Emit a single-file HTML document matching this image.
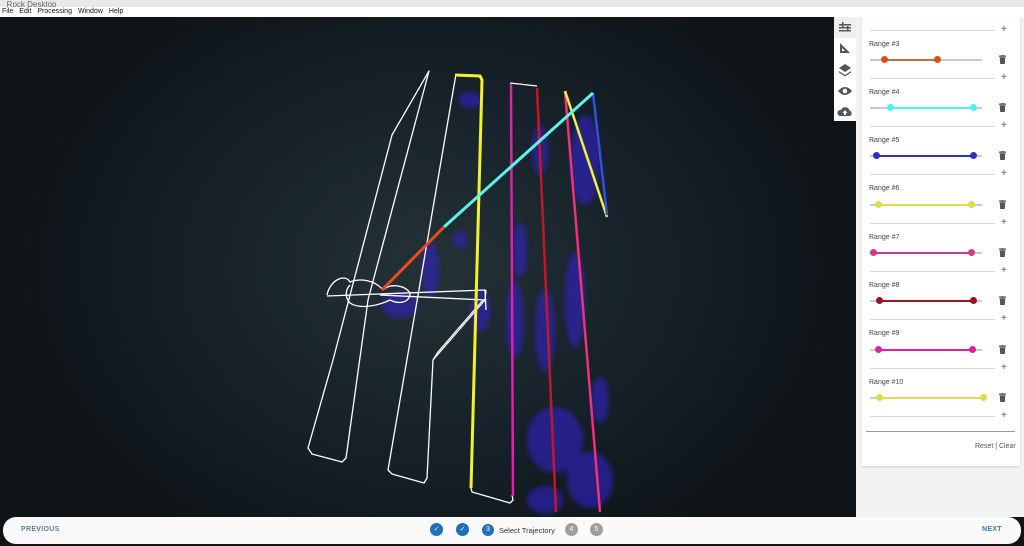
<!DOCTYPE html>
<html><head><meta charset="utf-8"><style>
*{margin:0;padding:0;box-sizing:border-box}
body{width:1024px;height:546px;overflow:hidden;background:#0e1417;font-family:"Liberation Sans",sans-serif;position:relative}
#title{position:absolute;left:0;top:0;width:1024px;height:7px;background:#e8e8e8;font-size:8px;color:#666;overflow:hidden}
#menu{position:absolute;left:0;top:7px;width:1024px;height:10px;background:#fff;font-size:7px;color:#111;line-height:10px}
#menu span{margin-left:2px;margin-right:4px}
#canvas{position:absolute;left:0;top:17px;width:834px;height:500px;background:radial-gradient(ellipse 420px 330px at 430px 250px,#243236 0%,#17222a 50%,#0e1417 100%)}
#tools{position:absolute;left:834px;top:17px;width:22px;height:104px;background:#fff}
#panel{position:absolute;left:856px;top:17px;width:168px;height:500px;background:#f2f2f2}
#card{position:absolute;left:862px;top:17px;width:158px;height:449px;background:#fff;box-shadow:0 1px 2px rgba(0,0,0,.15)}
.lbl{position:absolute;left:869px;font-size:7px;color:#444}
.trk{position:absolute;left:870px;width:112px;height:2px;background:#c5ccd8}
.rng{position:absolute;height:2px}
.th{position:absolute;width:7px;height:7px;border-radius:50%}
.trash{position:absolute;left:999px;width:7px;height:9px}
.pl{position:absolute;left:870px;width:125px;height:1px;background:#d8d8d8}
.plus{position:absolute;left:1001px;font-size:10px;color:#555;line-height:10px}
#bar{position:absolute;left:3px;top:517px;width:1018px;height:27px;background:#fafafa;border-radius:13px}
.step{position:absolute;top:523px;width:13px;height:13px;border-radius:50%;color:#fff;font-size:7px;text-align:center;line-height:13px}
</style></head><body>
<div id="title">&nbsp;&nbsp;&nbsp;Rock Desktop</div>
<div id="menu"><span>File</span><span>Edit</span><span>Processing</span><span>Window</span><span>Help</span></div>
<div id="canvas"></div>
<svg style="position:absolute;left:0;top:0" width="834" height="517">
<defs><filter id="b"><feGaussianBlur stdDeviation="2.5"/></filter></defs>
<g fill="#3320c8" opacity=".6" filter="url(#b)">
<ellipse cx="470" cy="100" rx="12" ry="8"/><ellipse cx="540" cy="150" rx="8" ry="25"/><ellipse cx="585" cy="160" rx="15" ry="45"/>
<ellipse cx="430" cy="270" rx="9" ry="28"/><ellipse cx="400" cy="305" rx="18" ry="13"/><ellipse cx="480" cy="310" rx="10" ry="22"/>
<ellipse cx="515" cy="320" rx="9" ry="38"/><ellipse cx="545" cy="330" rx="10" ry="42"/><ellipse cx="575" cy="300" rx="10" ry="48"/>
<ellipse cx="555" cy="440" rx="28" ry="33"/><ellipse cx="590" cy="480" rx="23" ry="28"/><ellipse cx="545" cy="500" rx="18" ry="14"/>
<ellipse cx="520" cy="250" rx="7" ry="28"/><ellipse cx="460" cy="240" rx="7" ry="9"/><ellipse cx="600" cy="400" rx="9" ry="23"/>
</g>
<g fill="none" stroke="#fff" stroke-width="1.3" stroke-linejoin="round">
<path d="M429 71 L392 135 L333 360 L308 448 L312 454 L342 462 L346 458 L368 300 Z"/>
<path d="M456 74 L388 470 L392 474 L424 483 L427 478 L433 360 L485 300 L486 290"/>
<path d="M433 360 L438 352 L483 300"/>
<path d="M327 295 C 330 280,345 273,350 282 C 360 278,375 280,383 290 C 390 283,405 285,410 293 C 410 302,400 305,390 300 C 380 305,360 310,350 303 C 345 298,345 290,350 285"/>
<path d="M327 296 L485 290 L486 310 M380 295 L485 300"/>
<path d="M471 488 L472 492 L510 503 L513 500 L512 495"/>
<path d="M510 83 L537 86"/>
</g>
<path d="M455 75 L480 76 L482 80 L471 488" stroke="#f2f22a" stroke-width="3" fill="none"/>
<path d="M511 84 L513 496" stroke="#e020b0" stroke-width="2.5"/>
<path d="M537 88 L556 512" stroke="#c0182a" stroke-width="2.5"/>
<path d="M565 91 L600 512" stroke="#f0307a" stroke-width="2.5"/>
<path d="M565 91 L607 217" stroke="#f0f040" stroke-width="2.5"/>
<path d="M593 93 L607 215" stroke="#3050e0" stroke-width="2.5"/>
<path d="M593 93 L444 227" stroke="#5ff0f0" stroke-width="3"/>
<path d="M444 227 L382 290" stroke="#ec4a1a" stroke-width="3"/>
</svg>
<div id="tools">
<svg width="22" height="104" fill="#555">
<rect x="0" y="0" width="22" height="21" fill="#eee"/>
<rect x="5" y="7" width="12" height="1.5"/><rect x="5" y="10" width="12" height="1.5"/><rect x="5" y="13" width="12" height="1.5"/>
<rect x="8" y="5" width="1.5" height="5"/><rect x="13" y="9" width="1.5" height="5"/>
<path d="M6 26 L6 36 L16 36 Z M8 31 L8 34 L11 34 Z" fill-rule="evenodd"/>
<path d="M11 47 L17 51 L11 55 L5 51 Z M5 54 L11 58 L17 54 L17 55.5 L11 59.5 L5 55.5Z"/>
<path d="M4 74 Q11 66 18 74 Q11 82 4 74Z"/><circle cx="11" cy="74" r="2.3" fill="#fff"/>
<path d="M6 99 A3 3 0 0 1 7 93 A4.5 4.5 0 0 1 15.5 93.5 A3 3 0 0 1 16 99 Z"/><path d="M11 93 L8.5 96 L10 96 L10 98 L12 98 L12 96 L13.5 96Z" fill="#fff"/>
</svg></div>
<div id="panel"></div>
<div id="card"></div>
<div class="pl" style="top:30px"></div><div class="plus" style="top:25px">+</div>

<div class="lbl" style="top:41px">Range #3</div><div class="trk" style="top:59px"></div><div class="rng" style="top:59px;left:884px;width:53px;background:#c86a40"></div><div class="th" style="top:56px;left:881px;background:#e64a19"></div><div class="th" style="top:56px;left:934px;background:#e64a19"></div><svg class="trash" style="top:55px" viewBox="0 0 7 9" fill="#555"><rect x="0" y="0.5" width="7" height="1.3"/><rect x="2.5" y="0" width="2" height="1"/><path d="M0.7 2.3H6.3L5.8 9H1.2Z"/></svg><div class="pl" style="top:78px"></div><div class="plus" style="top:73px">+</div>

<div class="lbl" style="top:89px">Range #4</div><div class="trk" style="top:107px"></div><div class="rng" style="top:107px;left:890px;width:83px;background:#4ef0f0"></div><div class="th" style="top:104px;left:887px;background:#4ef0f0"></div><div class="th" style="top:104px;left:970px;background:#4ef0f0"></div><svg class="trash" style="top:103px" viewBox="0 0 7 9" fill="#555"><rect x="0" y="0.5" width="7" height="1.3"/><rect x="2.5" y="0" width="2" height="1"/><path d="M0.7 2.3H6.3L5.8 9H1.2Z"/></svg><div class="pl" style="top:126px"></div><div class="plus" style="top:121px">+</div>

<div class="lbl" style="top:137px">Range #5</div><div class="trk" style="top:155px"></div><div class="rng" style="top:155px;left:876px;width:97px;background:#3030c0"></div><div class="th" style="top:152px;left:873px;background:#3030c0"></div><div class="th" style="top:152px;left:970px;background:#3030c0"></div><svg class="trash" style="top:151px" viewBox="0 0 7 9" fill="#555"><rect x="0" y="0.5" width="7" height="1.3"/><rect x="2.5" y="0" width="2" height="1"/><path d="M0.7 2.3H6.3L5.8 9H1.2Z"/></svg><div class="pl" style="top:174px"></div><div class="plus" style="top:169px">+</div>

<div class="lbl" style="top:185px">Range #6</div><div class="trk" style="top:204px"></div><div class="rng" style="top:204px;left:878px;width:93px;background:#dede50"></div><div class="th" style="top:201px;left:875px;background:#dede40"></div><div class="th" style="top:201px;left:968px;background:#dede40"></div><svg class="trash" style="top:200px" viewBox="0 0 7 9" fill="#555"><rect x="0" y="0.5" width="7" height="1.3"/><rect x="2.5" y="0" width="2" height="1"/><path d="M0.7 2.3H6.3L5.8 9H1.2Z"/></svg><div class="pl" style="top:223px"></div><div class="plus" style="top:218px">+</div>

<div class="lbl" style="top:234px">Range #7</div><div class="trk" style="top:252px"></div><div class="rng" style="top:252px;left:873px;width:98px;background:#d03a8a"></div><div class="th" style="top:249px;left:870px;background:#d03a8a"></div><div class="th" style="top:249px;left:968px;background:#d03a8a"></div><svg class="trash" style="top:248px" viewBox="0 0 7 9" fill="#555"><rect x="0" y="0.5" width="7" height="1.3"/><rect x="2.5" y="0" width="2" height="1"/><path d="M0.7 2.3H6.3L5.8 9H1.2Z"/></svg><div class="pl" style="top:271px"></div><div class="plus" style="top:266px">+</div>

<div class="lbl" style="top:282px">Range #8</div><div class="trk" style="top:300px"></div><div class="rng" style="top:300px;left:879px;width:94px;background:#a01020"></div><div class="th" style="top:297px;left:876px;background:#a01020"></div><div class="th" style="top:297px;left:970px;background:#a01020"></div><svg class="trash" style="top:296px" viewBox="0 0 7 9" fill="#555"><rect x="0" y="0.5" width="7" height="1.3"/><rect x="2.5" y="0" width="2" height="1"/><path d="M0.7 2.3H6.3L5.8 9H1.2Z"/></svg><div class="pl" style="top:319px"></div><div class="plus" style="top:314px">+</div>

<div class="lbl" style="top:330px">Range #9</div><div class="trk" style="top:349px"></div><div class="rng" style="top:349px;left:878px;width:94px;background:#e020a0"></div><div class="th" style="top:346px;left:875px;background:#e020a0"></div><div class="th" style="top:346px;left:969px;background:#e020a0"></div><svg class="trash" style="top:345px" viewBox="0 0 7 9" fill="#555"><rect x="0" y="0.5" width="7" height="1.3"/><rect x="2.5" y="0" width="2" height="1"/><path d="M0.7 2.3H6.3L5.8 9H1.2Z"/></svg><div class="pl" style="top:368px"></div><div class="plus" style="top:363px">+</div>

<div class="lbl" style="top:379px">Range #10</div><div class="trk" style="top:397px"></div><div class="rng" style="top:397px;left:879px;width:104px;background:#dede50"></div><div class="th" style="top:394px;left:876px;background:#dede40"></div><div class="th" style="top:394px;left:980px;background:#dede40"></div><svg class="trash" style="top:393px" viewBox="0 0 7 9" fill="#555"><rect x="0" y="0.5" width="7" height="1.3"/><rect x="2.5" y="0" width="2" height="1"/><path d="M0.7 2.3H6.3L5.8 9H1.2Z"/></svg><div class="pl" style="top:416px"></div><div class="plus" style="top:411px">+</div>

<div style="position:absolute;left:866px;top:431px;width:149px;height:1px;background:#999"></div>
<div style="position:absolute;left:975px;top:443px;font-size:7px;color:#555">Reset | Clear</div>

<div id="bar"></div>
<div style="position:absolute;left:21px;top:526px;font-size:7px;font-weight:bold;color:#5a7fa8;letter-spacing:.3px">PREVIOUS</div>
<div style="position:absolute;left:982px;top:526px;font-size:7px;font-weight:bold;color:#3a78c0;letter-spacing:.3px">NEXT</div>
<div class="step" style="left:430px;background:#1e6fc0">✓</div>
<div class="step" style="left:456px;background:#1e6fc0">✓</div>
<div class="step" style="left:482px;width:12px;height:12px;top:524px;line-height:12px;background:#1e6fc0">3</div>
<div style="position:absolute;left:499px;top:526px;font-size:7.5px;color:#333">Select Trajectory</div>
<div class="step" style="left:565px;background:#9e9e9e">4</div>
<div class="step" style="left:590px;background:#9e9e9e">5</div>
</body></html>
